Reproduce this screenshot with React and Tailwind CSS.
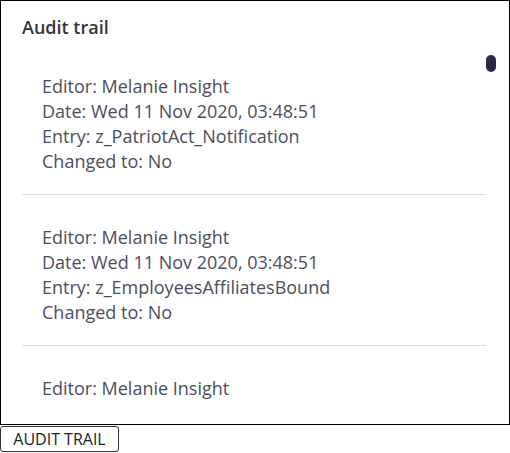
import React from "react";

const entries = [
  ["Editor: Melanie Insight", "Date: Wed 11 Nov 2020, 03:48:51", "Entry: z_PatriotAct_Notification", "Changed to: No"],
  ["Editor: Melanie Insight", "Date: Wed 11 Nov 2020, 03:48:51", "Entry: z_EmployeesAffiliatesBound", "Changed to: No"],
  ["Editor: Melanie Insight", "Date: Wed 11 Nov 2020, 03:48:51", "Entry: z_PatriotAct_Notification", "Changed to: No"],
];

export default function App() {
  return (
    <div className="bg-white" style={{ fontFamily: '"Open Sans", sans-serif' }}>
      <div className="relative flex flex-col w-[510px] h-[425px] border border-black overflow-hidden bg-white pb-[22px]">
        <div className="pl-[21px] pt-[14px] mb-[4px] text-[18px] leading-[25px] font-semibold text-[#34343f]">
          Audit trail
        </div>
        <div className="flex-1 min-h-0 overflow-hidden ml-[21px] mr-[23px]">
          {entries.map((e, i) => (
            <div key={i} className="pl-[20px] pt-[30px] pb-[20px] border-b border-[#dddddd] text-[18px] leading-[25px] text-[#4d4d5c]">
              {e.map((l, j) => (
                <div key={j}>{l}</div>
              ))}
            </div>
          ))}
        </div>
        <div className="absolute left-[485px] top-[54px] w-[10px] h-[17px] rounded-full bg-[#282b45]" />
      </div>
      <button className="block mt-[1px] h-[26px] w-[119px] border border-[#333] rounded-[3px] bg-white text-[16px] text-[#222] leading-[22px] p-0">
        AUDIT TRAIL
      </button>
    </div>
  );
}
